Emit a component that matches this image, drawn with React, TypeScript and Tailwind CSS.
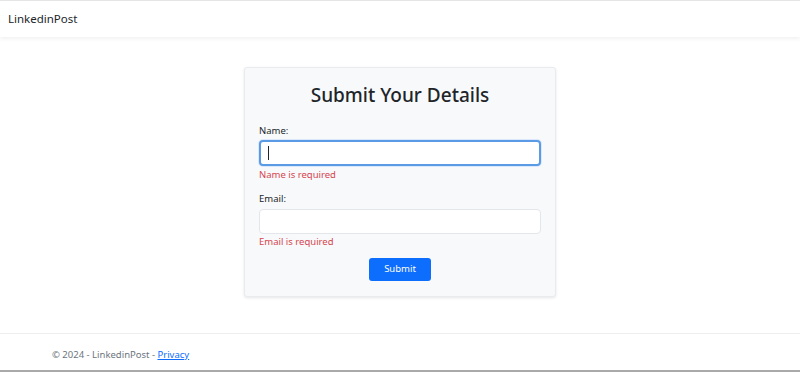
export default function App() {
  return (
    <div
      className="flex min-h-[372px] flex-col bg-white text-[#212529]"
      style={{ fontFamily: '"Noto Sans", "Open Sans", sans-serif' }}
    >
      {/* navbar */}
      <header className="flex h-[37px] items-center border-t border-[#e5e5e5] bg-white px-2 shadow-[0_2px_4px_rgba(0,0,0,0.06)]">
        <span className="text-[11.5px] text-[#212529]">LinkedinPost</span>
      </header>

      {/* form */}
      <main className="flex-1 pt-[30px]">
        <div className="mx-auto w-[312px] rounded-[3px] border border-[#e9ecef] bg-[#f8f9fa] px-[14px] pb-[15px] pt-[14px] shadow-[0_1px_3px_rgba(0,0,0,0.1)]">
          <h2 className="mb-[14px] text-center text-[19px] font-medium leading-[27px] text-[#212529]">
            Submit Your Details
          </h2>

          <label className="block text-[9.5px] leading-[15px] text-[#212529]">Name:</label>
          <div className="relative mt-[2px]">
            <input
              className="block h-[26px] w-full rounded-[4px] border-2 border-[#5b9be6] bg-white px-[8px] text-[12px] outline-none shadow-[0_0_0_1px_rgba(13,110,253,0.12)]"
              defaultValue=""
            />
            <span className="absolute left-[9px] top-[6px] h-[14px] w-px bg-[#212529]" />
          </div>
          <p className="pt-[1px] text-[9.5px] leading-[15px] text-[#d64550]">Name is required</p>

          <label className="mt-[9px] block text-[9.5px] leading-[15px] text-[#212529]">Email:</label>
          <input
            className="mt-[3px] block h-[25px] w-full rounded-[4px] border border-[#e3e6ea] bg-white px-[8px] text-[12px] outline-none"
            defaultValue=""
          />
          <p className="text-[9.5px] leading-[15px] text-[#d64550]">Email is required</p>

          <div className="mt-[9px] flex justify-center">
            <button className="h-[23px] w-[62px] rounded-[3px] bg-[#0d6efd] text-[9.5px] text-white">Submit</button>
          </div>
        </div>
      </main>

      {/* footer */}
      <footer className="mt-[34px] h-[39px] border-t border-[#eceeef] border-b-2 border-b-[#a9a9a9] px-[52px] pt-[13px] text-[9.5px] leading-[15px] text-[#6c757d]">
        © 2024 - LinkedinPost - <a href="#" className="text-[#0d6efd] underline">Privacy</a>
      </footer>
    </div>
  );
}
